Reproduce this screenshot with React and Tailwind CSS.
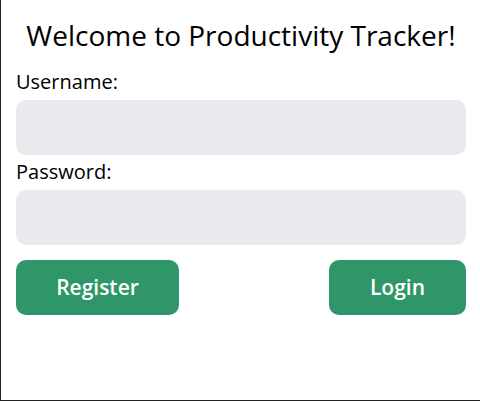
import React from 'react';

function App() {
  return (
    <div className="h-[401px] w-full border-l border-b border-[#222] bg-white font-['Open_Sans',sans-serif] text-black">
      <div className="w-[465px] pl-[15px] pt-[15px]">
        <h1 className="text-center text-[28px] leading-[40px] font-normal">Welcome to Productivity Tracker!</h1>
        <form className="mt-[15px] flex flex-col">
          <label className="text-[20px] leading-[24px]">Username:</label>
          <input className="mt-[6px] h-[55px] w-full rounded-[10px] bg-[#e9eaee] px-3 outline-none" type="text" />
          <label className="mt-[5px] text-[20px] leading-[24px]">Password:</label>
          <input className="mt-[6px] h-[55px] w-full rounded-[10px] bg-[#e9eaee] px-3 outline-none" type="password" />
          <div className="mt-[15px] flex justify-between">
            <button type="button" className="h-[55px] w-[163px] rounded-[10px] bg-[#2e9669] text-[21px] font-semibold text-white">
              Register
            </button>
            <button type="button" className="h-[55px] w-[137px] rounded-[10px] bg-[#2e9669] text-[21px] font-semibold text-white">
              Login
            </button>
          </div>
        </form>
      </div>
    </div>
  );
}

export default App;
